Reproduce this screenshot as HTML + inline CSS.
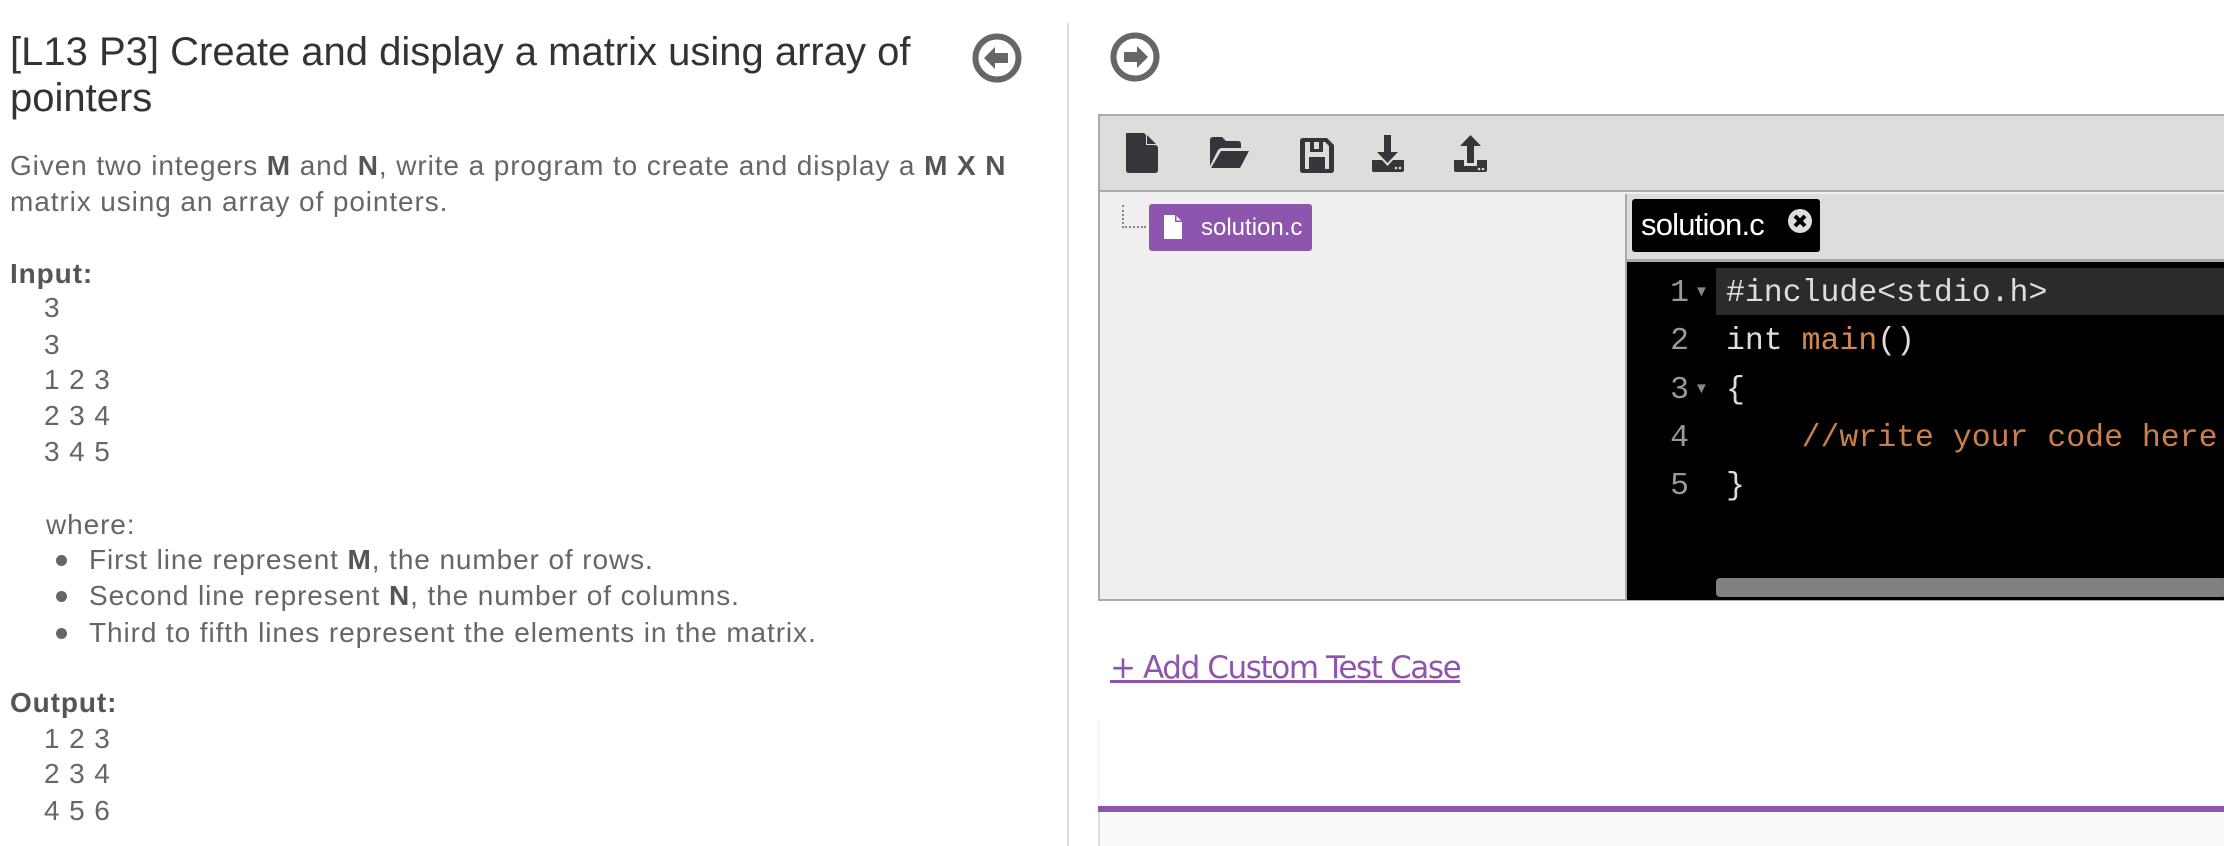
<!DOCTYPE html>
<html><head><meta charset="utf-8">
<style>
*{margin:0;padding:0;box-sizing:border-box}
body{width:2224px;height:846px;overflow:hidden;background:#fff;font-family:"Liberation Sans",sans-serif;color:#666;position:relative}
.a{position:absolute;white-space:nowrap}
.t{font-size:40px;color:#333;line-height:46px}
.p{font-size:28px;line-height:36px;letter-spacing:0.9px}
b{color:#555}
.mono{font-family:"Liberation Mono",monospace;font-size:31.5px}
.fa{position:absolute;font-size:15px;color:#888}
</style></head><body>
<div class="a t" style="left:10px;top:29px">[L13 P3] Create and display a matrix using array of</div>
<div class="a t" style="left:10px;top:75px">pointers</div>
<svg class="a" style="left:972px;top:33px" width="50" height="50" viewBox="0 0 50 50"><circle cx="25" cy="25" r="21.5" fill="#fff" stroke="#666" stroke-width="6"/><path d="M12 25 L23 14 V20 H36 V30 H23 V36 Z" fill="#666"/></svg>
<div class="a" style="left:1067px;top:23px;width:2px;height:823px;background:#ddd"></div>
<svg class="a" style="left:1110px;top:32px" width="50" height="50" viewBox="0 0 50 50"><circle cx="25" cy="25" r="21.5" fill="#fff" stroke="#666" stroke-width="6"/><path d="M38 25 L27 14 V20 H14 V30 H27 V36 Z" fill="#666"/></svg>

<div class="a p" style="left:10px;top:148px">Given two integers <b>M</b> and <b>N</b>, write a program to create and display a <b>M X N</b></div>
<div class="a p" style="left:10px;top:184px">matrix using an array of pointers.</div>
<div class="a p" style="left:10px;top:256px"><b>Input:</b></div>
<div class="a p" style="left:44px;top:290px">3</div>
<div class="a p" style="left:44px;top:327px">3</div>
<div class="a p" style="left:44px;top:362px">1 2 3</div>
<div class="a p" style="left:44px;top:398px">2 3 4</div>
<div class="a p" style="left:44px;top:434px">3 4 5</div>
<div class="a p" style="left:46px;top:507px">where:</div>
<div class="a" style="left:56px;top:555px;width:11px;height:11px;border-radius:50%;background:#666"></div>
<div class="a" style="left:56px;top:591px;width:11px;height:11px;border-radius:50%;background:#666"></div>
<div class="a" style="left:56px;top:628px;width:11px;height:11px;border-radius:50%;background:#666"></div>
<div class="a p" style="left:89px;top:542px">First line represent <b>M</b>, the number of rows.</div>
<div class="a p" style="left:89px;top:578px">Second line represent <b>N</b>, the number of columns.</div>
<div class="a p" style="left:89px;top:615px">Third to fifth lines represent the elements in the matrix.</div>
<div class="a p" style="left:10px;top:685px"><b>Output:</b></div>
<div class="a p" style="left:44px;top:721px">1 2 3</div>
<div class="a p" style="left:44px;top:756px">2 3 4</div>
<div class="a p" style="left:44px;top:793px">4 5 6</div>

<!-- editor -->
<div class="a" style="left:1098px;top:114px;width:1130px;height:487px;border:2px solid #aaa;background:#efefef"></div>
<div class="a" style="left:1100px;top:116px;width:1124px;height:76px;background:#ddd;border-bottom:2px solid #aaa"></div>
<svg class="a" style="left:1120px;top:130px" width="400" height="46" viewBox="0 0 400 46">
<g fill="#36353a">
<path d="M6 3 H24 L38 17 V40 Q38 43 35 43 H9 Q6 43 6 40 Z"/><path d="M26 3 L38 15 H26 Z" fill="#ddd"/><path d="M27 5 L36 14 H27Z"/>
<path d="M90 10 Q90 7 93 7 H102 L106 11 H118 Q121 11 121 14 V18 H102 Q99 18 97 22 L90 36 Z"/><path d="M101 21 H129 L120 38 H91 Z"/>
<path d="M183 8 H207 L214 15 V40 Q214 43 211 43 H183 Q180 43 180 40 V11 Q180 8 183 8 Z M185 12 V39 H209 V16 L205 12 H203 V22 H190 V12 Z M194 12 V19 H199 V12 Z M189 27 H205 V39 H189 Z" fill-rule="evenodd"/>
<path d="M264 5 H271 V22 H278 L267.5 33 L257 22 H264 Z"/><path d="M252 30 H262 L267.5 36 L273 30 H284 V40 Q284 42 282 42 H254 Q252 42 252 40 Z"/>
<path d="M347 33 V16 H340 L350.5 5 L361 16 H354 V33 Z"/><path d="M334 30 H344 V36 H357 V30 H367 V40 Q367 42 365 42 H336 Q334 42 334 40 Z"/>
</g>
<g fill="#ddd"><circle cx="276" cy="38" r="1.3"/><circle cx="280" cy="38" r="1.3"/><circle cx="359" cy="39" r="1.3"/><circle cx="363" cy="39" r="1.3"/></g>
</svg>
<div class="a" style="left:1122px;top:205px;width:24px;height:23px;border-left:2px dotted #888;border-bottom:2px dotted #888"></div>
<div class="a" style="left:1149px;top:204px;width:163px;height:47px;background:#8e55ae;border-radius:3px"></div>
<svg class="a" style="left:1162px;top:214px" width="22" height="26" viewBox="0 0 22 26"><path d="M2 1 H13 L20 8 V25 H2 Z" fill="#fff"/><path d="M13 1 V8 H20" fill="#8e55ae"/><path d="M14.5 2 L19 6.5 H14.5Z" fill="#fff"/></svg>
<div class="a" style="left:1201px;top:214px;font-size:24px;color:#fff">solution.c</div>

<div class="a" style="left:1625px;top:194px;width:2px;height:406px;background:#aaa"></div>
<div class="a" style="left:1627px;top:194px;width:600px;height:66px;background:#ddd"></div>
<div class="a" style="left:1632px;top:199px;width:188px;height:53px;background:#000;border-radius:3px"></div>
<div class="a" style="left:1641px;top:207px;font-size:31px;color:#fff;letter-spacing:-0.8px">solution.c</div>
<svg class="a" style="left:1787px;top:208px" width="26" height="26" viewBox="0 0 26 26"><circle cx="13" cy="13" r="12" fill="#ddd"/><path d="M8 8 L18 18 M18 8 L8 18" stroke="#000" stroke-width="4"/></svg>
<div class="a" style="left:1627px;top:259px;width:600px;height:341px;background:#000;border-top:3px solid #aaa"></div>
<div class="a" style="left:1716px;top:268px;width:510px;height:47px;background:#2b2b2b"></div>
<div class="a mono" style="left:1655px;top:270px;line-height:48.3px;color:#999;text-align:right;width:34px">1<br>2<br>3<br>4<br>5</div>
<div class="fa" style="left:1694px;top:283px">▼</div>
<div class="fa" style="left:1694px;top:380px">▼</div>
<div class="a mono" style="left:1726px;top:270px;line-height:48.3px;color:#ddd;white-space:pre">#include&lt;stdio.h&gt;
int <span style="color:#d0894f">main</span>()
{
    <span style="color:#c9804d">//write your code here</span>
}</div>
<div class="a" style="left:1716px;top:578px;width:510px;height:19px;background:#808080;border-radius:4px"></div>

<div class="a" style="left:1110px;top:650px;font-size:31px;color:#8e55ae;text-decoration:underline;font-family:'DejaVu Sans',sans-serif;letter-spacing:-1.4px">+ Add Custom Test Case</div>
<div class="a" style="left:1098px;top:720px;width:1130px;height:90px;border-left:1px solid #f2f2f2"></div>
<div class="a" style="left:1098px;top:806px;width:1130px;height:6px;background:#8e55ae"></div>
<div class="a" style="left:1098px;top:812px;width:1130px;height:34px;background:#f9f9f9;border-left:2px solid #ddd"></div>
</body></html>
